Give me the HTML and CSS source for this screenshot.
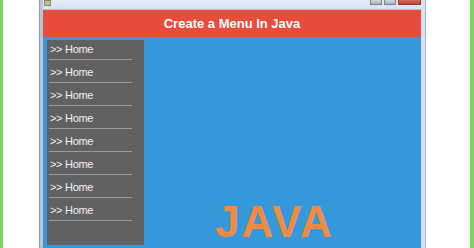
FILE: index.html
```html
<!DOCTYPE html>
<html lang="en">
<head>
    <meta charset="UTF-8">
    <meta name="viewport" content="width=device-width, initial-scale=1.0">
    <title>Create a Menu In Java</title>
    <link rel="stylesheet" href="styles.css">
</head>
<body>
<main class="page">
    <section class="window">
        <div class="titlebar">
            <span class="app-icon"></span>
            <div class="win-buttons">
                <span class="win-btn"></span>
                <span class="win-btn"></span>
                <span class="win-btn close"></span>
            </div>
        </div>
        <header class="header">Create a Menu In Java</header>
        <div class="content">
            <ul class="menu">
                <li class="item">&gt;&gt; Home</li>
                <li class="item">&gt;&gt; Home</li>
                <li class="item">&gt;&gt; Home</li>
                <li class="item">&gt;&gt; Home</li>
                <li class="item">&gt;&gt; Home</li>
                <li class="item">&gt;&gt; Home</li>
                <li class="item">&gt;&gt; Home</li>
                <li class="item">&gt;&gt; Home</li>
            </ul>
            <div class="stage">
                <span class="logo">JAVA</span>
            </div>
        </div>
    </section>
</main>
</body>
</html>
```

FILE: styles.css
```css
*, *::before, *::after{
    box-sizing: border-box;
    padding: 0;
    margin: 0;
    font-family: 'Liberation Sans', Arial, sans-serif;
}

body{
    background-color: #FFF;
    overflow: hidden;
}

.page{
    width: 474px;
    height: 248px;
    display: flex;
    border-left: 3px solid #7fd65a;
    border-right: 4px solid #7fd65a;
    padding-left: 37px;
}

.window{
    width: 385px;
    height: 248px;
    display: flex;
    flex-direction: column;
    border-left: 3px solid #b7c4d3;
    border-right: 4px solid #d3e2f3;
    box-shadow: -1px 0 0 #8e9aa8, 1px 0 0 #a7b7c9;
}

.titlebar{
    height: 10px;
    display: flex;
    justify-content: space-between;
    background: linear-gradient(#e3ecf6, #d5e2f1);
    border-bottom: 1px solid #b0c0d2;
}

.app-icon{
    width: 7px;
    height: 6px;
    margin-left: 1px;
    background-color: #c9b98f;
    border: 1px solid #8e8462;
}

.win-buttons{
    display: flex;
    gap: 2px;
    height: 5px;
}

.win-btn{
    width: 12px;
    background: linear-gradient(#d2d7dd, #aab2bc);
    border: 1px solid #7b838d;
    border-top: none;
}

.win-btn.close{
    width: 23px;
    background: linear-gradient(#d86a5c, #c5422f);
    border-color: #8d3a30;
}

.header{
    height: 27px;
    display: flex;
    align-items: center;
    justify-content: center;
    background-color: #e74c3c;
    color: #FFF;
    font-size: 13px;
    font-weight: bold;
}

.content{
    flex: 1;
    display: flex;
    background-color: #3498db;
    padding: 3px 0 3px 4px;
}

.menu{
    width: 97px;
    list-style: none;
    background-color: #616161;
}

.item{
    color: #f2f2f2;
    font-size: 11px;
    letter-spacing: -0.3px;
    line-height: 13px;
    padding: 3px 0 0 3px;
    margin-bottom: 3px;
}

.item::after{
    content: '';
    display: block;
    width: 83px;
    height: 1px;
    margin: 3px 0 0 -1px;
    background-color: #9b9b9b;
}

.stage{
    flex: 1;
    display: flex;
    align-items: flex-end;
}

.logo{
    margin: 0 0 1px 71px;
    color: #f28b3f;
    font-size: 44px;
    letter-spacing: 2px;
    line-height: 44px;
    font-weight: bold;
}
```
